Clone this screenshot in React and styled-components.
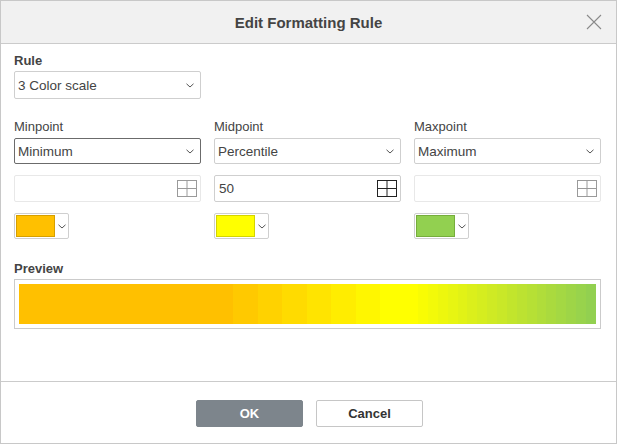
import React from "react";
import styled, { createGlobalStyle } from "styled-components";

const Global = createGlobalStyle`
  html, body { margin: 0; padding: 0; background: #fff; }
  body { font-family: "Liberation Sans", Arial, sans-serif; }
  * { box-sizing: border-box; }
`;

const Dialog = styled.div`
  width: 617px;
  height: 444px;
  border: 1px solid #c8c8c8;
  display: flex;
  flex-direction: column;
  background: #fff;
  color: #444;
`;

const Header = styled.div`
  position: relative;
  height: 43px;
  flex: none;
  background: #f1f1f1;
  border-bottom: 1px solid #cbcbcb;
  display: flex;
  align-items: center;
  justify-content: center;
  font-weight: bold;
  font-size: 15px;
  color: #444;
`;

const Close = styled.button`
  position: absolute;
  right: 14px;
  top: 13px;
  width: 16px;
  height: 16px;
  padding: 0;
  border: 0;
  background: none;
  display: flex;
`;

const Body = styled.div`
  flex: 1;
  padding: 9px 15px 0 13px;
  display: flex;
  flex-direction: column;
`;

const Label = styled.div`
  font-size: 13px;
  line-height: 15px;
  font-weight: ${(p) => (p.$bold ? "bold" : "normal")};
  color: #444;
  margin-bottom: ${(p) => p.$mb || 3}px;
  margin-top: ${(p) => p.$mt || 0}px;
`;

const Select = styled.div`
  width: 187px;
  height: ${(p) => p.$h || 28}px;
  border: 1px solid ${(p) => (p.$focus ? "#6b6b6b" : "#cfcfcf")};
  border-radius: 2px;
  display: flex;
  align-items: center;
  justify-content: space-between;
  padding: 0 6px 0 3px;
  font-size: 13.5px;
  color: #444;
`;

const Grid = styled.div`
  display: grid;
  grid-template-columns: repeat(3, 187px);
  column-gap: 13px;
  margin-top: 20px;
`;

const Column = styled.div`
  display: flex;
  flex-direction: column;
`;

const Input = styled.div`
  margin-top: 11px;
  width: 187px;
  height: 27px;
  border: 1px solid ${(p) => (p.$disabled ? "#e8e8e8" : "#cfcfcf")};
  border-radius: 2px;
  display: flex;
  align-items: center;
  justify-content: space-between;
  padding: 0 3px 0 4px;
  font-size: 13.5px;
  color: #444;
`;

const ColorButton = styled.div`
  margin-top: 11px;
  width: 55px;
  height: 26px;
  border: 1px solid #cfcfcf;
  border-radius: 2px;
  display: flex;
  align-items: center;
  padding: 1px;
  gap: 3px;
`;

const Swatch = styled.div`
  width: 39px;
  height: 22px;
  background: ${(p) => p.$color};
  border: 1px solid ${(p) => p.$edge};
`;

const PreviewBox = styled.div`
  width: 587px;
  height: 50px;
  border: 1px solid #cbcbcb;
  padding: 4px 4px;
  display: flex;
`;

const Bar = styled.div`
  flex: 1;
  display: flex;
`;

const Segment = styled.div`
  height: 100%;
  flex: none;
`;

const Footer = styled.div`
  height: 62px;
  flex: none;
  border-top: 1px solid #cbcbcb;
  display: flex;
  justify-content: center;
  align-items: flex-start;
  padding-top: 18px;
  gap: 13px;
  padding-left: 2px;
`;

const Button = styled.button`
  width: 107px;
  height: 27px;
  border-radius: 2px;
  font-family: "Liberation Sans", Arial, sans-serif;
  font-weight: bold;
  font-size: 13px;
  border: 1px solid ${(p) => (p.$primary ? "#7d858c" : "#c6c6c6")};
  background: ${(p) => (p.$primary ? "#7d858c" : "#fff")};
  color: ${(p) => (p.$primary ? "#fff" : "#333")};
  padding: 0;
`;

const Chevron = () => (
  <svg width="8" height="5" viewBox="0 0 8 5">
    <path d="M0.5 0.8 L4 4 L7.5 0.8" fill="none" stroke="#555" strokeWidth="1" />
  </svg>
);

const GridIcon = ({ color }) => (
  <svg width="20" height="17" viewBox="0 0 20 17">
    <rect x="0.5" y="0.5" width="19" height="16" fill="none" stroke={color} />
    <path d="M10 0.5 V16.5 M0.5 8.5 H19.5" stroke={color} />
  </svg>
);

const hex = (c) => c.toString(16).padStart(2, "0");
const lerp = (a, b, t) => [0, 1, 2].map((i) => Math.round(a[i] + (b[i] - a[i]) * t));
const rgb = (c) => "#" + c.map(hex).join("");
const ORANGE = [255, 192, 0];
const YELLOW = [255, 255, 0];
const GREEN = [146, 208, 80];

const segments = (() => {
  const s = [{ w: 214, c: rgb(ORANGE) }];
  for (let i = 1; i <= 6; i++) s.push({ w: 24.5, c: rgb(lerp(ORANGE, YELLOW, i / 7)) });
  s.push({ w: 38, c: rgb(YELLOW) });
  const n = 18;
  for (let i = 1; i <= n; i++) s.push({ w: 178 / n, c: rgb(lerp(YELLOW, GREEN, i / n)) });
  return s;
})();

const columns = [
  { label: "Minpoint", value: "Minimum", focus: true, input: "", disabled: true, color: "#ffc000", edge: "#d69f00" },
  { label: "Midpoint", value: "Percentile", input: "50", disabled: false, color: "#ffff00", edge: "#d4d400" },
  { label: "Maxpoint", value: "Maximum", input: "", disabled: true, color: "#92d050", edge: "#76ad3c" },
];

export default function App() {
  return (
    <>
      <Global />
      <Dialog>
        <Header>
          Edit Formatting Rule
          <Close aria-label="Close">
            <svg width="16" height="16" viewBox="0 0 16 16">
              <path d="M1 1 L15 15 M15 1 L1 15" stroke="#8a8a8a" strokeWidth="1.1" />
            </svg>
          </Close>
        </Header>
        <Body>
          <Label $bold>Rule</Label>
          <Select>
            <span>3 Color scale</span>
            <Chevron />
          </Select>
          <Grid>
            {columns.map((col) => (
              <Column key={col.label}>
                <Label $mb={4}>{col.label}</Label>
                <Select $focus={col.focus} $h={26}>
                  <span>{col.value}</span>
                  <Chevron />
                </Select>
                <Input $disabled={col.disabled}>
                  <span>{col.input}</span>
                  <GridIcon color={col.disabled ? "#9a9a9a" : "#222"} />
                </Input>
                <ColorButton>
                  <Swatch $color={col.color} $edge={col.edge} />
                  <Chevron />
                </ColorButton>
              </Column>
            ))}
          </Grid>
          <Label $bold $mt={22}>Preview</Label>
          <PreviewBox>
            <Bar>
              {segments.map((s, i) => (
                <Segment key={i} style={{ width: s.w, background: s.c }} />
              ))}
            </Bar>
          </PreviewBox>
        </Body>
        <Footer>
          <Button $primary>OK</Button>
          <Button>Cancel</Button>
        </Footer>
      </Dialog>
    </>
  );
}
